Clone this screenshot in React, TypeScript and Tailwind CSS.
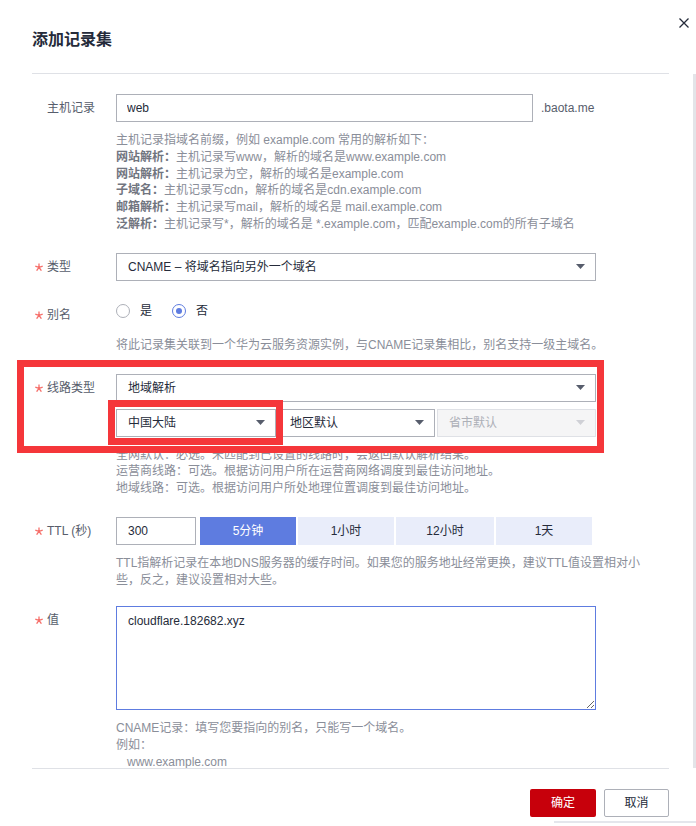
import type { ReactNode } from 'react';

const SANS = "[font-family:'Liberation_Sans','Noto_Sans_CJK_SC',sans-serif]";

function Caret({ muted = false }: { muted?: boolean }) {
  return (
    <svg width="9" height="5" viewBox="0 0 9 5" className="shrink-0">
      <path d="M0 0h9L4.5 5z" fill={muted ? '#cfd0d6' : '#575d6c'} />
    </svg>
  );
}

// red required mark in front of labels
function RequiredMark() {
  return (
    <svg width="8" height="8" viewBox="0 0 8 8" className="shrink-0">
      <path
        d="M4 4.4V0.4M4 4.4L0.3 3.1M4 4.4L7.7 3.1M4 4.4L1.6 7.7M4 4.4L6.4 7.7"
        stroke="#f66f6a"
        strokeWidth="1.3"
        fill="none"
      />
    </svg>
  );
}

function Select({
  value,
  className = '',
  disabled = false,
}: {
  value: string;
  className?: string;
  disabled?: boolean;
}) {
  return (
    <div
      className={`h-[28px] flex items-center justify-between pl-[11px] pr-[10px] border ${
        disabled
          ? 'bg-[#f5f5f6] border-[#dfe1e6] text-[#adb0b8]'
          : 'bg-white border-[#adb0b8] text-[#252b3a]'
      } ${className}`}
    >
      <span className="leading-[16px]">{value}</span>
      <Caret muted={disabled} />
    </div>
  );
}

function Help({ children, className = '' }: { children: ReactNode; className?: string }) {
  return (
    <div className={`mt-[10px] w-[530px] text-[#8a8e99] leading-[16.8px] ${className}`}>{children}</div>
  );
}

function Line({ children, className = '' }: { children: ReactNode; className?: string }) {
  return <div className={`h-[16.8px] whitespace-nowrap ${className}`}>{children}</div>;
}

function FormItem({
  label,
  required = false,
  children,
  className = '',
}: {
  label: string;
  required?: boolean;
  children: ReactNode;
  className?: string;
}) {
  return (
    <div className={`flex mb-[20px] ${className}`}>
      <div className="w-[84px] shrink-0 flex leading-[28px] text-[#575d6c]">
        <span className="w-[12px] h-[28px] flex items-center justify-end pr-[1px]">
          {required && <RequiredMark />}
        </span>
        <span className="ml-[3px]">{label}</span>
      </div>
      <div className="flex flex-col w-[480px]">{children}</div>
    </div>
  );
}

function Radio({ checked, label }: { checked: boolean; label: string }) {
  return (
    <div className="flex items-center">
      <span
        className={`w-[14px] h-[14px] rounded-full border flex items-center justify-center ${
          checked ? 'border-[#5e7ce0]' : 'border-[#adb0b8]'
        }`}
      >
        {checked && <span className="w-[6px] h-[6px] rounded-full bg-[#5e7ce0]" />}
      </span>
      <span className="ml-[10px] text-[#252b3a] leading-[14px]">{label}</span>
    </div>
  );
}

const ttlOptions = [
  { label: '5分钟', w: 'w-[96px]', active: true },
  { label: '1小时', w: 'w-[96px]', active: false },
  { label: '12小时', w: 'w-[98px]', active: false },
  { label: '1天', w: 'w-[96px]', active: false },
];

export default function App() {
  return (
    <div className={`relative w-[696px] h-[826px] bg-white overflow-hidden text-[12px] ${SANS}`}>
      {/* header */}
      <div className="relative h-[73px] pt-[28px] pl-[32px]">
        <h2 className="text-[16px] leading-[24px] font-bold text-[#252b3a]">添加记录集</h2>
        <button className="absolute left-[679px] top-[18px] w-[10px] h-[10px]">
          <svg width="10" height="10" viewBox="0 0 10 10">
            <path d="M0.5 0.5l9 9M9.5 0.5l-9 9" stroke="#252b3a" strokeWidth="1.3" />
          </svg>
        </button>
      </div>
      <div className="ml-[32px] w-[637px] h-px bg-[#dfe1e6]" />

      {/* scrolling body */}
      <div className="relative h-[694px] overflow-hidden pt-[20px] pl-[32px]">
        <div className="absolute right-0 top-0 w-[3px] h-full bg-[#e3e4e8]" />

        <FormItem label="主机记录">
          <div className="flex items-center">
            <input
              defaultValue="web"
              className="w-[417px] h-[28px] border border-[#adb0b8] px-[10px] text-[#252b3a] outline-none"
            />
            <span className="ml-[8px] text-[#575d6c]">.baota.me</span>
          </div>
          <Help>
            <Line>主机记录指域名前缀，例如 example.com 常用的解析如下：</Line>
            <Line>
              <b className="text-[#71757f]">网站解析：</b>主机记录写www，解析的域名是www.example.com
            </Line>
            <Line>
              <b className="text-[#71757f]">网站解析：</b>主机记录为空，解析的域名是example.com
            </Line>
            <Line>
              <b className="text-[#71757f]">子域名：</b>主机记录写cdn，解析的域名是cdn.example.com
            </Line>
            <Line>
              <b className="text-[#71757f]">邮箱解析：</b>主机记录写mail，解析的域名是 mail.example.com
            </Line>
            <Line>
              <b className="text-[#71757f]">泛解析：</b>主机记录写*，解析的域名是 *.example.com，匹配example.com的所有子域名
            </Line>
          </Help>
        </FormItem>

        <FormItem label="类型" required>
          <Select value="CNAME – 将域名指向另外一个域名" className="w-[480px]" />
        </FormItem>

        <FormItem label="别名" required>
          <div className="h-[26px] pt-[3px] flex items-start gap-[20px]">
            <Radio checked={false} label="是" />
            <Radio checked label="否" />
          </div>
          <Help>
            <Line>将此记录集关联到一个华为云服务资源实例，与CNAME记录集相比，别名支持一级主域名。</Line>
          </Help>
        </FormItem>

        <FormItem label="线路类型" required className="relative">
          <Select value="地域解析" className="w-[480px]" />
          <div className="mt-[7px] flex gap-[2px]">
            <div className="relative">
              <Select value="中国大陆" className="w-[160px]" />
              <div className="absolute -left-[8px] -top-[9px] w-[175px] h-[45px] border-[7px] border-[#f5363a]" />
            </div>
            <Select value="地区默认" className="w-[157px]" />
            <Select value="省市默认" className="w-[159px]" disabled />
          </div>
          <Help>
            <Line>全网默认：必选。未匹配到已设置的线路时，会返回默认解析结果。</Line>
            <Line>运营商线路：可选。根据访问用户所在运营商网络调度到最佳访问地址。</Line>
            <Line>地域线路：可选。根据访问用户所处地理位置调度到最佳访问地址。</Line>
          </Help>
          <div className="absolute -left-[15px] -top-[14px] w-[587px] h-[93px] border-[7px] border-[#f5363a]" />
        </FormItem>

        <FormItem label="TTL (秒)" required>
          <div className="flex items-center">
            <input
              defaultValue="300"
              className="w-[80px] h-[28px] border border-[#adb0b8] px-[11px] text-[#252b3a] outline-none"
            />
            <div className="ml-[4px] flex gap-[2px]">
              {ttlOptions.map((o) => (
                <button
                  key={o.label}
                  className={`${o.w} h-[28px] ${
                    o.active ? 'bg-[#5e7ce0] text-white' : 'bg-[#e9edfa] text-[#252b3a]'
                  }`}
                >
                  {o.label}
                </button>
              ))}
            </div>
          </div>
          <Help className="h-[31px]">
            TTL指解析记录在本地DNS服务器的缓存时间。如果您的服务地址经常更换，建议TTL值设置相对小些，反之，建议设置相对大些。
          </Help>
        </FormItem>

        <FormItem label="值" required>
          <textarea
            defaultValue="cloudflare.182682.xyz"
            className="w-[480px] h-[104px] border border-[#5e7ce0] px-[11px] py-[6px] leading-[16px] text-[#252b3a] outline-none"
          />
          <Help>
            <Line>CNAME记录：填写您要指向的别名，只能写一个域名。</Line>
            <Line>例如：</Line>
            <Line className="pl-[11px]">www.example.com</Line>
          </Help>
        </FormItem>
      </div>

      {/* footer */}
      <div className="ml-[32px] w-[637px] h-px bg-[#dfe1e6]" />
      <div className="ml-[32px] w-[637px] pt-[20px] flex justify-end gap-[8px]">
        <button className="w-[66px] h-[28px] bg-[#c7000b] text-white rounded-[2px]">确定</button>
        <button className="w-[65px] h-[28px] bg-white border border-[#adb0b8] text-[#252b3a] rounded-[2px]">
          取消
        </button>
      </div>
      <div className="absolute right-0 bottom-[3px] w-[142px] h-[2px] bg-[#e4e6ec]" />
    </div>
  );
}
